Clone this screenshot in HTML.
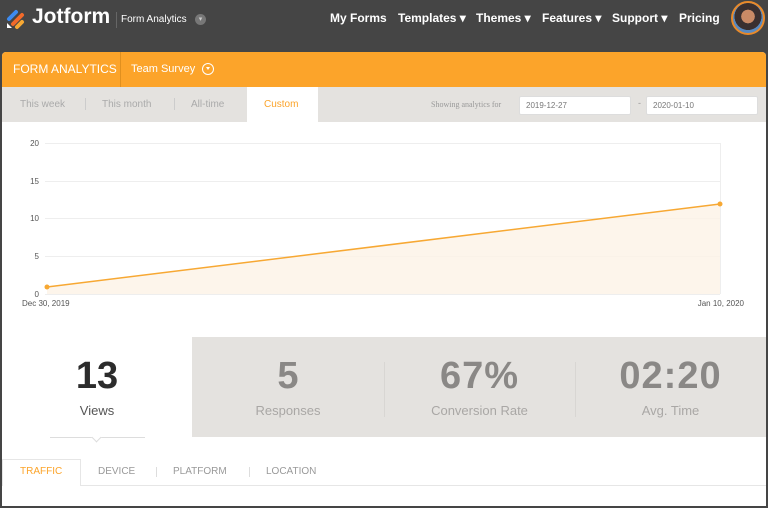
<!DOCTYPE html>
<html><head><style>
*{margin:0;padding:0;box-sizing:border-box}
body{width:768px;height:508px;background:#454545;font-family:"Liberation Sans",sans-serif;position:relative;overflow:hidden}
.abs{position:absolute}
.nav{color:#fff;font-size:12px;font-weight:bold;top:11px}
</style></head><body>
<svg class="abs" style="left:4px;top:8px" width="22" height="22" viewBox="0 0 22 22">
<path d="M5 11 L12 4" stroke="#3d8bf0" stroke-width="4" stroke-linecap="round"/>
<path d="M9 16 L18 7" stroke="#f26a2a" stroke-width="4" stroke-linecap="round"/>
<path d="M13 19 L18 14" stroke="#f7a833" stroke-width="4" stroke-linecap="round"/>
<path d="M3 15 L3 20 L8 20 Z" fill="#fff"/>
</svg>
<div class="abs" style="left:32px;top:5px;color:#fff;font-size:21px;font-weight:bold">Jotform</div>
<div class="abs" style="left:116px;top:12px;width:1px;height:16px;background:#666"></div>
<div class="abs" style="left:121px;top:14px;color:#fff;font-size:10px">Form Analytics</div>
<div class="abs" style="left:195px;top:14px;width:11px;height:11px;border-radius:50%;background:#777;color:#ccc;font-size:7px;text-align:center;line-height:11px">▾</div>
<div class="abs nav" style="left:330px">My Forms</div>
<div class="abs nav" style="left:398px">Templates ▾</div>
<div class="abs nav" style="left:476px">Themes ▾</div>
<div class="abs nav" style="left:542px">Features ▾</div>
<div class="abs nav" style="left:612px">Support ▾</div>
<div class="abs nav" style="left:679px">Pricing</div>
<div class="abs" style="left:731px;top:1px;width:34px;height:34px;border-radius:50%;background:radial-gradient(circle at 50% 45%,#c98a66 0 30%,#3a3030 31% 60%,#5a8ac0 61%);border:2px solid #e98a2a"></div>

<div class="abs" style="left:2px;top:52px;width:764px;height:454px;background:#fff;border-radius:4px 4px 0 0;overflow:hidden">
 <div class="abs" style="left:0;top:0;width:764px;height:35px;background:#fca42a"></div>
 <div class="abs" style="left:11px;top:10px;color:#fff;font-size:12px">FORM ANALYTICS</div>
 <div class="abs" style="left:118px;top:0;width:1px;height:35px;background:#e0901f"></div>
 <div class="abs" style="left:129px;top:11px;color:#fff;font-size:11px">Team Survey</div>
 <div class="abs" style="left:200px;top:11px;width:12px;height:12px;border:1.5px solid #fff;border-radius:50%"><div style="margin:2.5px auto 0;width:0;height:0;border-left:2.5px solid transparent;border-right:2.5px solid transparent;border-top:3px solid #fff"></div></div>
 <div class="abs" style="left:0;top:35px;width:764px;height:35px;background:#e4e2df"></div>
 <div class="abs" style="left:18px;top:47px;color:#aaa;font-size:10px">This week</div>
 <div class="abs" style="left:83px;top:46px;width:1px;height:12px;background:#ccc"></div>
 <div class="abs" style="left:100px;top:47px;color:#aaa;font-size:10px">This month</div>
 <div class="abs" style="left:172px;top:46px;width:1px;height:12px;background:#ccc"></div>
 <div class="abs" style="left:189px;top:47px;color:#aaa;font-size:10px">All-time</div>
 <div class="abs" style="left:245px;top:35px;width:71px;height:35px;background:#fff"></div>
 <div class="abs" style="left:262px;top:47px;color:#fca42a;font-size:10px">Custom</div>
 <div class="abs" style="left:429px;top:48px;color:#999;font-size:8px;font-family:'Liberation Serif',serif">Showing analytics for</div>
 <div class="abs" style="left:517px;top:44px;width:112px;height:19px;background:#fff;border:1px solid #ddd;border-radius:2px;font-size:8px;color:#777;padding:4px 6px">2019-12-27</div>
 <div class="abs" style="left:636px;top:46px;color:#999;font-size:9px">-</div>
 <div class="abs" style="left:644px;top:44px;width:112px;height:19px;background:#fff;border:1px solid #ddd;border-radius:2px;font-size:8px;color:#777;padding:4px 6px">2020-01-10</div>
</div>

<svg class="abs" style="left:0;top:130px" width="768" height="180" viewBox="0 130 768 180">
 <g stroke="#eee" stroke-width="1">
  <line x1="45" y1="143.5" x2="720" y2="143.5"/><line x1="45" y1="181.5" x2="720" y2="181.5"/>
  <line x1="45" y1="218.5" x2="720" y2="218.5"/><line x1="45" y1="256.5" x2="720" y2="256.5"/>
  <line x1="45" y1="294.5" x2="720" y2="294.5"/><line x1="720.5" y1="143" x2="720.5" y2="294"/>
 </g>
 <polygon points="47,287 720,204 720,294 47,294" fill="#fdf3e6" opacity="0.8"/>
 <line x1="47" y1="287" x2="720" y2="204" stroke="#f7a833" stroke-width="1.5"/>
 <circle cx="47" cy="287" r="2.5" fill="#f7a833"/><circle cx="720" cy="204" r="2.5" fill="#f7a833"/>
 <g font-size="8" fill="#555" text-anchor="end" font-family="Liberation Sans">
  <text x="39" y="146">20</text><text x="39" y="184">15</text><text x="39" y="221">10</text><text x="39" y="259">5</text><text x="39" y="297">0</text>
 </g>
 <text x="22" y="306" font-size="8" fill="#555" font-family="Liberation Sans">Dec 30, 2019</text>
 <text x="744" y="306" font-size="8" fill="#555" text-anchor="end" font-family="Liberation Sans">Jan 10, 2020</text>
</svg>

<div class="abs" style="left:192px;top:337px;width:574px;height:100px;background:#e4e2df"></div>
<div class="abs" style="left:384px;top:362px;width:1px;height:55px;background:#d8d6d3"></div>
<div class="abs" style="left:575px;top:362px;width:1px;height:55px;background:#d8d6d3"></div>
<div class="abs" style="left:2px;top:355px;width:190px;text-align:center;font-size:38px;font-weight:bold;color:#2c2c2c">13</div>
<div class="abs" style="left:2px;top:403px;width:190px;text-align:center;font-size:13px;color:#555">Views</div>
<div class="abs" style="left:50px;top:437px;width:95px;height:1px;background:#ddd"></div>
<div class="abs" style="left:93px;top:434px;width:7px;height:7px;background:#fff;border-right:1px solid #ddd;border-bottom:1px solid #ddd;transform:rotate(45deg)"></div>
<div class="abs" style="left:192px;top:355px;width:192px;text-align:center;font-size:38px;font-weight:bold;color:#8a8886">5</div>
<div class="abs" style="left:192px;top:403px;width:192px;text-align:center;font-size:13px;color:#a9a7a5">Responses</div>
<div class="abs" style="left:384px;top:355px;width:191px;text-align:center;font-size:38px;font-weight:bold;color:#8a8886;letter-spacing:1px">67%</div>
<div class="abs" style="left:384px;top:403px;width:191px;text-align:center;font-size:13px;color:#a9a7a5">Conversion Rate</div>
<div class="abs" style="left:575px;top:355px;width:191px;text-align:center;font-size:38px;font-weight:bold;color:#8a8886;letter-spacing:1px">02:20</div>
<div class="abs" style="left:575px;top:403px;width:191px;text-align:center;font-size:13px;color:#a9a7a5">Avg. Time</div>

<div class="abs" style="left:2px;top:485px;width:764px;height:1px;background:#e6e6e6"></div>
<div class="abs" style="left:2px;top:459px;width:79px;height:27px;background:#fff;border:1px solid #e6e6e6;border-bottom:none"></div>
<div class="abs" style="left:20px;top:466px;font-size:10px;color:#fca42a">TRAFFIC</div>
<div class="abs" style="left:98px;top:466px;font-size:10px;color:#999">DEVICE</div>
<div class="abs" style="left:156px;top:467px;width:1px;height:10px;background:#ddd"></div>
<div class="abs" style="left:173px;top:466px;font-size:10px;color:#999">PLATFORM</div>
<div class="abs" style="left:249px;top:467px;width:1px;height:10px;background:#ddd"></div>
<div class="abs" style="left:266px;top:466px;font-size:10px;color:#999">LOCATION</div>
</body></html>
